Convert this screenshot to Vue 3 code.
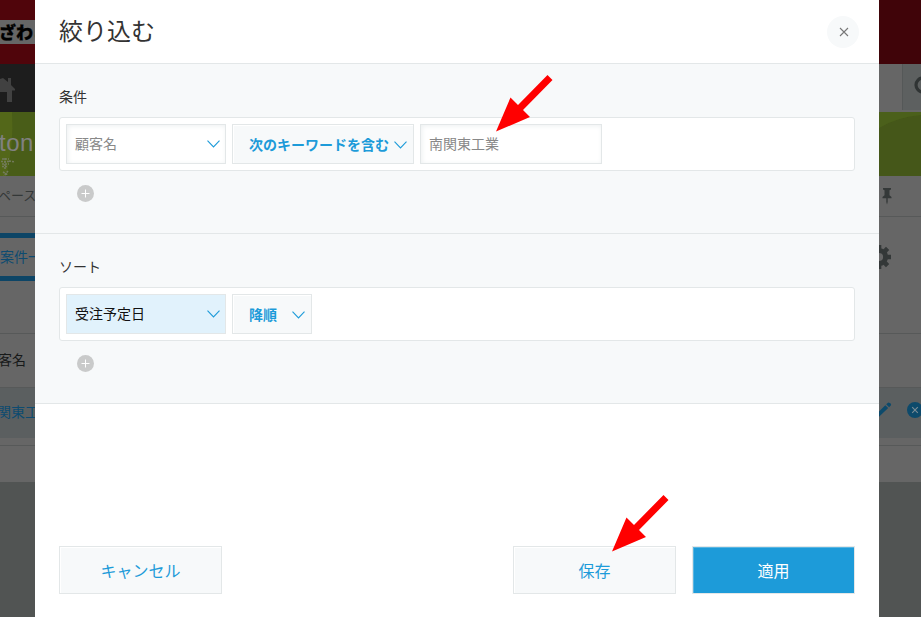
<script setup>
const filters = [
  {
    title: '条件',
    fields: [
      { text: '顧客名', kind: 'select', width: 160 },
      { text: '次のキーワードを含む', kind: 'operator', width: 182 },
      { text: '南関東工業', kind: 'input', width: 182 },
    ],
  },
  {
    title: 'ソート',
    fields: [
      { text: '受注予定日', kind: 'selected', width: 160 },
      { text: '降順', kind: 'operator', width: 80 },
    ],
  },
]
const arrows = ['to-keyword', 'to-save']
</script>

<template>
  <div class="screen">
    <div class="page">
      <div class="row brand">
        <div class="brand-left"><span class="brand-name">ざわこ</span></div>
      </div>
      <div class="row nav">
        <svg class="home" width="17" height="26" viewBox="0 0 17 26">
          <path d="M0 1 3 0 8 4V0h3v7l4 4v1.500h-3V24H7V14H0Z" fill="#414141" />
        </svg>
        <div class="search">
          <svg width="18" height="46" viewBox="0 0 18 46">
            <circle cx="20" cy="21" r="7" fill="none" stroke="#303434" stroke-width="3.2" />
          </svg>
        </div>
      </div>
      <div class="row cover">
        <svg class="hill" width="42" height="64" viewBox="0 0 42 64">
          <path d="M0 16Q18 5 42 3V64H0Z" fill="#455719" />
          <path d="M0 16Q18 5 42 3V0H0Z" fill="#4b601b" />
        </svg>
        <svg class="hill left" width="35" height="64" viewBox="0 0 35 64">
          <path d="M0 0H12Q14 34 6 64H0Z" fill="#536719" />
        </svg>
        <span class="cover-title">ton</span>
        <svg class="cover-mark" width="17" height="20" viewBox="0 0 17 20">
          <path d="M2 2H9M1 4.500H10M2 7H9M2 9.500H8M5 1V13M9 4 15 5M3 15l5 3M8 14l-4 5" fill="none" stroke="#737b5c" stroke-width="1.6" stroke-dasharray="2 1" />
        </svg>
      </div>
      <div class="row crumbs">
        <span>ペース</span>
        <svg class="pin" width="10" height="17" viewBox="0 0 10 17">
          <path d="M1 0h8v1.6L7.5 2.3v5L9.5 9v1.2H5.7V14L5 16.5 4.3 14v-3.8H.5V9l2-1.700v-5L1 1.600Z" fill="#343838" />
        </svg>
      </div>
      <div class="row tabs">
        <span class="tab">案件一</span>
        <svg class="gear" width="14" height="26" viewBox="0 0 14 26">
          <g fill="none" stroke="#343838">
            <circle cx="0" cy="13" r="6.6" stroke-width="5" />
            <path d="M0 13 12 13M0 13 8.6 4.4M0 13 8.6 21.6M0 13V1M0 13V25" stroke-width="4.6" stroke-dasharray="0 7 6" />
          </g>
        </svg>
      </div>
      <div class="row heading"><span>客名</span></div>
      <div class="row record">
        <span>関東工</span>
        <div class="record-icons">
          <svg width="13" height="16" viewBox="0 0 13 16">
            <path d="M0 9.5 6.3 3.2 9.2 6 0 14.8Z M7.2 2.3 9.3.4Q12.7 1 12 3.3L10.1 5.2Z" fill="#0d4a6b" />
          </svg>
          <svg width="16" height="16" viewBox="0 0 16 16">
            <circle cx="8" cy="8" r="8" fill="#0d4a6b" />
            <path d="m5.200 5.200 5.600 5.600m0-5.600-5.600 5.600" stroke="#7d8d95" stroke-width="1.1" />
          </svg>
        </div>
      </div>
      <div class="row spacer"></div>
      <div class="row bottom"></div>
    </div>

    <div class="dialog">
      <header class="dialog-head">
        <h1>絞り込む</h1>
        <button class="close" aria-label="閉じる">
          <svg width="10" height="10" viewBox="0 0 10 10">
            <path d="m1 1 8 8M9 1 1 9" stroke="#777" stroke-width="1.1" />
          </svg>
        </button>
      </header>

      <section v-for="group in filters" :key="group.title" class="group">
        <h2>{{ group.title }}</h2>
        <div class="fields">
          <div
            v-for="field in group.fields"
            :key="field.text"
            class="field"
            :class="field.kind"
            :style="{ width: field.width + 'px' }"
          >
            <span>{{ field.text }}</span>
            <svg v-if="field.kind !== 'input'" class="chevron" width="13" height="8" viewBox="0 0 13 8">
              <path d="M.5.7 6.5 6.9 12.5.7" fill="none" stroke="#1d9bd9" stroke-width="1.1" />
            </svg>
          </div>
        </div>
        <svg class="add" width="17" height="17" viewBox="0 0 17 17">
          <circle cx="8.5" cy="8.5" r="8.5" fill="#c9caca" />
          <path d="M4.5 8.5h8M8.5 4.5v8" stroke="#fff" stroke-width="1" />
        </svg>
      </section>

      <footer class="actions">
        <button class="btn cancel">キャンセル</button>
        <button class="btn">保存</button>
        <button class="btn primary">適用</button>
      </footer>
    </div>

    <svg v-for="name in arrows" :key="name" class="arrow" :class="name" width="58" height="58" viewBox="0 0 58 58">
      <path d="M0 56.5 14.5 22.5 22 30 51.5 0 56.5 5 27 35 34 42Z" fill="#f00" />
    </svg>
  </div>
</template>

<style>
body {
  margin: 0;
}
</style>

<style scoped>
.screen {
  position: relative;
  width: 921px;
  height: 617px;
  overflow: hidden;
  box-sizing: border-box;
  font-family: "Noto Sans CJK JP", "Noto Sans", sans-serif;
  font-size: 14px;
  line-height: 20px;
  color: #333;
}
.screen * {
  box-sizing: border-box;
}
svg {
  display: block;
  flex: none;
}
.page {
  display: flex;
  flex-direction: column;
  height: 617px;
  background: #666;
}
.row {
  position: relative;
  display: flex;
  justify-content: space-between;
  flex: none;
  white-space: nowrap;
}
.brand {
  height: 64px;
  padding-top: 20px;
  background: linear-gradient(90deg, #50050b 35px, #400409 879px);
}
.brand-left {
  width: 60px;
  height: 24px;
  background: #666;
}
.brand-name {
  display: block;
  margin-left: -1px;
  font-size: 17px;
  font-weight: 900;
  line-height: 24px;
  color: #000;
  -webkit-text-stroke: 0.3px #000;
}
.nav {
  height: 48px;
  background: linear-gradient(90deg, #1d1d1d 860px, #666 860px);
}
.home {
  margin-top: 14px;
}
.search {
  width: 19px;
  height: 46px;
  border-left: 1px solid #555858;
  background: #5d6060;
}
.cover {
  height: 64px;
  background: #495d18;
}
.hill {
  position: absolute;
  right: 0;
  top: 0;
}
.hill.left {
  right: auto;
  left: 0;
}
.cover-title {
  position: relative;
  margin: 15px 0 0 -1px;
  font-family: "Liberation Sans", sans-serif;
  font-size: 24px;
  line-height: 31px;
  letter-spacing: 0.5px;
  color: #818181;
}
.cover-mark {
  position: absolute;
  left: 0;
  top: 45px;
}
.crumbs {
  height: 41px;
  padding: 9px 29px 0 0;
  border-bottom: 1px solid #575959;
  color: #343838;
}
.crumbs span {
  margin-left: -2px;
  font-size: 13px;
}
.pin {
  margin-top: 3px;
}
.tabs {
  height: 117px;
  padding: 16px 28px 0 0;
  border-bottom: 1px solid #575959;
}
.tab {
  width: 48px;
  height: 48px;
  border: solid #0d4566;
  border-width: 5px 0;
  line-height: 37px;
  color: #0d4b70;
}
.gear {
  margin-top: 11px;
}
.heading {
  height: 54px;
  padding-top: 15px;
  border-bottom: 1px solid #575959;
  color: #171919;
}
.heading span {
  margin-left: -2px;
}
.record {
  height: 50px;
  padding-top: 14px;
  background: #5b5f60;
  color: #0d4b70;
}
.record span {
  margin: -1px 0 0 -3px;
}
.record-icons {
  display: flex;
  gap: 15px;
  width: 42px;
}
.spacer {
  height: 44px;
  background: linear-gradient(#666 7px, #575959 7px, #575959 8px, #666 8px);
}
.bottom {
  flex: 1;
  background: #515453;
}

.dialog {
  position: absolute;
  left: 35px;
  top: 0;
  width: 844px;
  height: 617px;
  display: flex;
  flex-direction: column;
  background: #fff;
}
.dialog-head {
  display: flex;
  align-items: center;
  justify-content: space-between;
  height: 64px;
  padding: 0 20px 0 24px;
  border-bottom: 1px solid #e3e7e8;
}
h1 {
  margin: 0;
  padding-bottom: 3px;
  font-size: 24px;
  font-weight: 400;
  line-height: 36px;
}
.close {
  display: flex;
  align-items: center;
  justify-content: center;
  width: 32px;
  height: 32px;
  padding: 1px 0 0 2px;
  border: 0;
  border-radius: 50%;
  background: #f7f9fa;
}
.group {
  height: 170px;
  padding: 22px 24px 0;
  border-bottom: 1px solid #e3e7e8;
  background: #f7f9fa;
}
h2 {
  margin: 0 0 11px;
  font-size: 14px;
  font-weight: 400;
  line-height: 20px;
}
.fields {
  display: flex;
  gap: 6px;
  height: 54px;
  padding: 6px;
  border: 1px solid #e3e7e8;
  border-radius: 3px;
  background: #fff;
}
.field {
  display: flex;
  align-items: center;
  justify-content: space-between;
  height: 40px;
  padding: 0 5px 1px 8px;
  border: 1px solid #e3e7e8;
  box-shadow: inset 1px 1px 5px #edf0f1;
  color: #888;
  white-space: nowrap;
}
.field span {
  padding-bottom: 2px;
}
.operator {
  padding: 1px 6px 0 16px;
  background: #f7f9fa;
  box-shadow: inset 1px 1px 0 #fff;
  color: #1d9bd9;
  font-weight: 700;
}
.selected {
  background: #e1f2fc;
  box-shadow: none;
  color: #111;
}
.add {
  margin: 14px 0 0 18px;
}
.actions {
  display: flex;
  gap: 16px;
  margin-top: auto;
  padding: 0 24px 23px;
}
.btn {
  width: 163px;
  height: 48px;
  padding: 0;
  border: 1px solid #e3e7e8;
  background: #f7f9fa;
  box-shadow: inset 1px 1px 0 #fff;
  font-family: inherit;
  font-size: 16px;
  line-height: 46px;
  color: #1d9bd9;
}
.cancel {
  margin-right: auto;
}
.primary {
  background: #1d9bd9;
  box-shadow: inset 1px 1px 0 #58b5e2;
  color: #fff;
}
.arrow {
  position: absolute;
}
.to-keyword {
  left: 496px;
  top: 75px;
}
.to-save {
  left: 612px;
  top: 495px;
}
</style>
